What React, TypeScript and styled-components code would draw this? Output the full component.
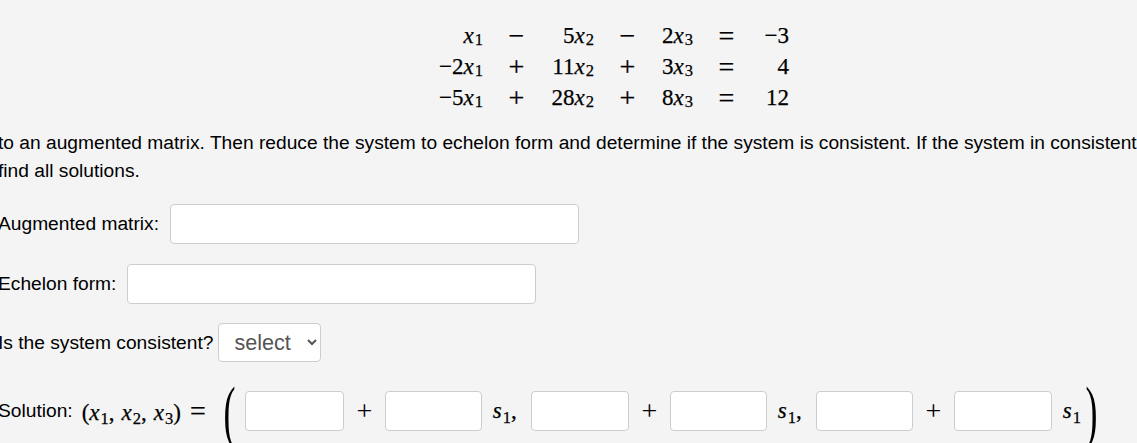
import React from "react";
import styled, { createGlobalStyle } from "styled-components";

const Global = createGlobalStyle`
  html, body {
    margin: 0;
    padding: 0;
    background: #f4f4f4;
    overflow: hidden;
  }
  body {
    font-family: "Liberation Sans", Arial, sans-serif;
    color: #000;
  }
`;

const Page = styled.div`
  width: 1180px;
  height: 443px;
  margin-left: -2px;
  padding-top: 20px;
  box-sizing: border-box;
  overflow: hidden;
  font-size: 19.2px;
`;

const System = styled.div`
  display: grid;
  grid-template-columns: 52px 17px 44px 17px 32px 17px 29px;
  grid-auto-rows: 31px;
  column-gap: 25px;
  margin-left: 433px;
  font-family: "Liberation Serif", "Times New Roman", serif;
  font-size: 23px;
  -webkit-text-stroke: 0.25px #000;
`;

const Cell = styled.div<{ $align: "end" | "center" }>`
  display: flex;
  align-items: center;
  justify-content: ${(p) => (p.$align === "end" ? "flex-end" : "center")};
  white-space: nowrap;
`;

const Op = styled.span`
  font-size: 28px;
  line-height: 1;
`;

const Var = styled.span`
  font-style: italic;
`;

const Sub = styled.span`
  font-size: 0.72em;
  position: relative;
  top: 0.3em;
  margin-left: 1px;
  line-height: 0;
`;

const Prompt = styled.div`
  margin-top: 16px;
  line-height: 28px;
  white-space: nowrap;
`;

const FieldRow = styled.div<{ $mt: number; $gap: number }>`
  display: flex;
  align-items: center;
  gap: ${(p) => p.$gap}px;
  margin-top: ${(p) => p.$mt}px;
  white-space: nowrap;
`;

const TextBox = styled.input<{ $w: number; $ml?: number }>`
  width: ${(p) => p.$w}px;
  height: 40px;
  margin-left: ${(p) => p.$ml ?? 0}px;
  box-sizing: border-box;
  border: 1px solid #cdcdcd;
  border-radius: 4px;
  background: #fff;
  padding: 0 8px;
  font: inherit;
  outline: none;
  flex: none;
`;

const Select = styled.select`
  width: 103px;
  height: 39px;
  box-sizing: border-box;
  border: 1px solid #cdcdcd;
  border-radius: 4px;
  background: #fff;
  padding: 0 4px 0 11px;
  font-family: "Liberation Sans", Arial, sans-serif;
  font-size: 21.6px;
  color: #555;
  outline: none;
`;

const SolutionRow = styled.div`
  display: flex;
  align-items: center;
  margin-top: 15px;
  height: 68px;
  white-space: nowrap;
`;

const MathText = styled.span<{ $ml?: number }>`
  font-family: "Liberation Serif", "Times New Roman", serif;
  font-size: 23px;
  margin-left: ${(p) => p.$ml ?? 0}px;
  display: inline-flex;
  align-items: baseline;
  -webkit-text-stroke: 0.25px #000;
`;

const Rel = styled.span`
  font-size: 28px;
  line-height: 1;
  margin: 0 0 0 9px;
`;

const Comma = styled.span`
  margin-right: 7px;
`;

const BigParen = styled.span<{ $ml: number }>`
  display: inline-flex;
  align-items: center;
  justify-content: center;
  width: 15px;
  height: 68px;
  margin-left: ${(p) => p.$ml}px;
  font-family: "Liberation Serif", "Times New Roman", serif;
  font-size: 50px;
  line-height: 68px;
  transform: scale(0.72, 1.4);
  transform-origin: center;
  flex: none;
`;

const PlusSlot = styled.span`
  width: 41px;
  flex: none;
  text-align: center;
  font-family: "Liberation Serif", "Times New Roman", serif;
  font-size: 28px;
`;

const ParamSlot = styled.span<{ $w: number }>`
  width: ${(p) => p.$w}px;
  flex: none;
  padding-left: 11px;
  box-sizing: border-box;
  font-family: "Liberation Serif", "Times New Roman", serif;
  font-size: 23px;
  -webkit-text-stroke: 0.25px #000;
`;

type Term = { coef: string; idx: number };

const rows: { terms: Term[]; ops: string[]; rhs: string }[] = [
  { terms: [{ coef: "", idx: 1 }, { coef: "5", idx: 2 }, { coef: "2", idx: 3 }], ops: ["−", "−"], rhs: "−3" },
  { terms: [{ coef: "−2", idx: 1 }, { coef: "11", idx: 2 }, { coef: "3", idx: 3 }], ops: ["+", "+"], rhs: "4" },
  { terms: [{ coef: "−5", idx: 1 }, { coef: "28", idx: 2 }, { coef: "8", idx: 3 }], ops: ["+", "+"], rhs: "12" },
];

const X = ({ i }: { i: number }) => (
  <>
    <Var>x</Var>
    <Sub>{i}</Sub>
  </>
);

const S1 = () => (
  <>
    <Var>s</Var>
    <Sub>1</Sub>
  </>
);

export default function App() {
  return (
    <>
      <Global />
      <Page>
        <System>
          {rows.map((r, ri) => (
            <React.Fragment key={ri}>
              <Cell $align="end">
                {r.terms[0].coef}
                <X i={1} />
              </Cell>
              <Cell $align="center">
                <Op>{r.ops[0]}</Op>
              </Cell>
              <Cell $align="end">
                {r.terms[1].coef}
                <X i={2} />
              </Cell>
              <Cell $align="center">
                <Op>{r.ops[1]}</Op>
              </Cell>
              <Cell $align="end">
                {r.terms[2].coef}
                <X i={3} />
              </Cell>
              <Cell $align="center">
                <Op>=</Op>
              </Cell>
              <Cell $align="end">{r.rhs}</Cell>
            </React.Fragment>
          ))}
        </System>

        <Prompt>
          <div>
            to an augmented matrix. Then reduce the system to echelon form and determine if the system is consistent. If the system in consistent,
          </div>
          <div>find all solutions.</div>
        </Prompt>

        <FieldRow $mt={19} $gap={11}>
          <span>Augmented matrix:</span>
          <TextBox $w={409} type="text" />
        </FieldRow>

        <FieldRow $mt={20} $gap={11}>
          <span>Echelon form:</span>
          <TextBox $w={409} type="text" />
        </FieldRow>

        <FieldRow $mt={19} $gap={5}>
          <span>Is the system consistent?</span>
          <Select defaultValue="select">
            <option value="select">select</option>
            <option value="yes">yes</option>
            <option value="no">no</option>
          </Select>
        </FieldRow>

        <SolutionRow>
          <span>Solution:</span>
          <MathText $ml={9}>
            (<X i={1} />
            <Comma>,</Comma>
            <X i={2} />
            <Comma>,</Comma>
            <X i={3} />)<Rel>=</Rel>
          </MathText>
          <BigParen $ml={16}>(</BigParen>
          <TextBox $w={99} $ml={8} type="text" />
          <PlusSlot>+</PlusSlot>
          <TextBox $w={97} type="text" />
          <ParamSlot $w={49}>
            <S1 />,
          </ParamSlot>
          <TextBox $w={98} type="text" />
          <PlusSlot>+</PlusSlot>
          <TextBox $w={97} type="text" />
          <ParamSlot $w={49}>
            <S1 />,
          </ParamSlot>
          <TextBox $w={97} type="text" />
          <PlusSlot>+</PlusSlot>
          <TextBox $w={98} type="text" />
          <ParamSlot $w={32}>
            <S1 />
          </ParamSlot>
          <BigParen $ml={0}>)</BigParen>
        </SolutionRow>
      </Page>
    </>
  );
}
